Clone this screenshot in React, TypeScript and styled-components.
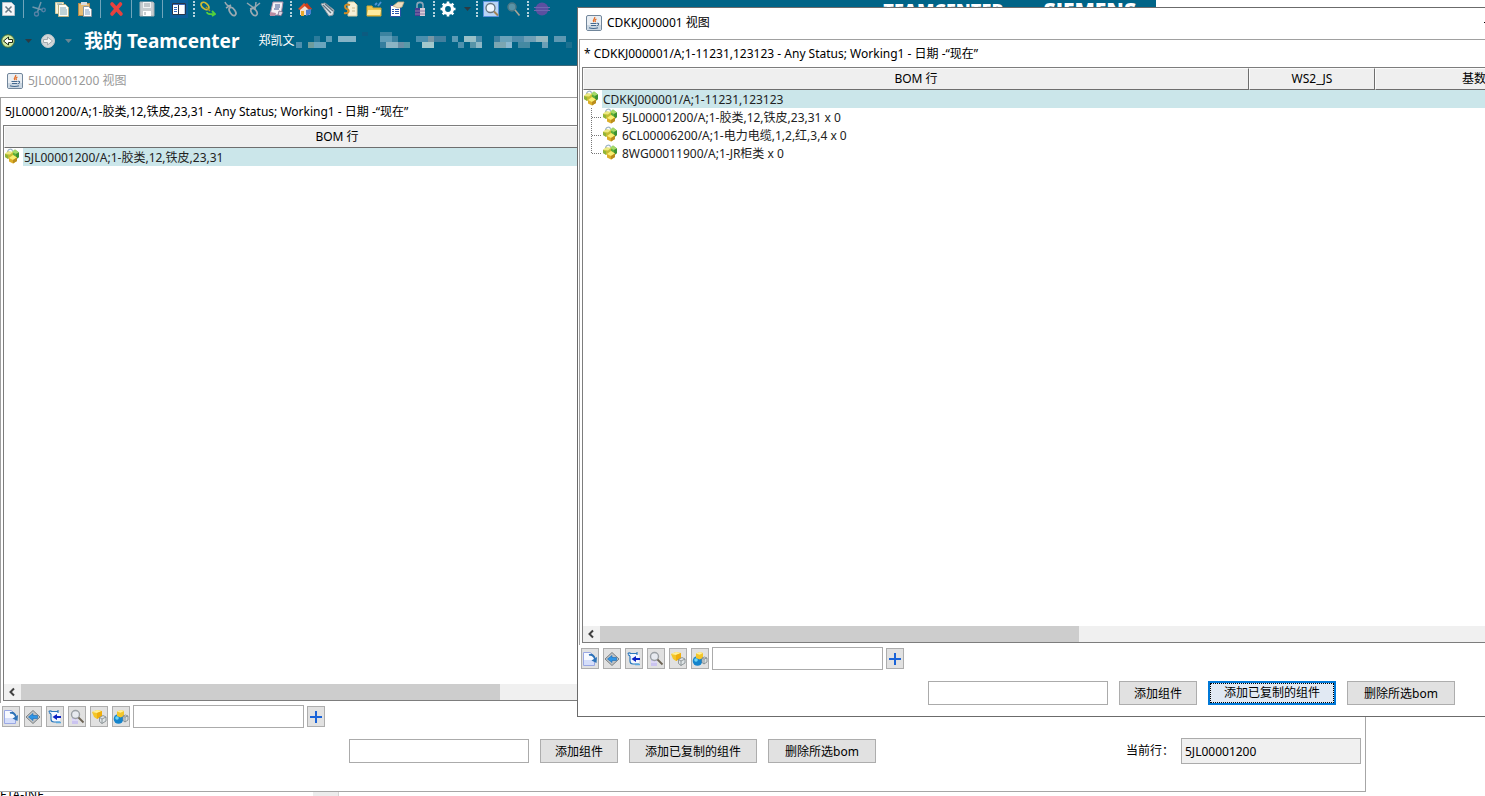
import React from 'react';
import styled, { createGlobalStyle, css } from 'styled-components';

const GlobalStyle = createGlobalStyle`
  * { box-sizing: border-box; }
  html, body, #root { height: 100%; }
  body {
    margin: 0;
    overflow: hidden;
    background: #fff;
    color: #000;
    font: 12px/18px "Noto Sans", "Noto Sans CJK SC", sans-serif;
  }
  button, input { font: inherit; color: inherit; }
`;

const Desktop = styled.div`
  position: relative;
  height: 100%;
  overflow: hidden;
  display: flex;
  flex-direction: column;
`;

/* ---------- main application, behind the two view windows ---------- */

const AppHeader = styled.header`
  height: 66px;
  margin-right: 329px;
  background: #006487;
  color: #fff;
  display: flex;
  justify-content: space-between;
  overflow: hidden;
`;

const Brand = styled.div`
  display: flex;
  gap: 40px;
  padding-right: 20px;
  font-family: "Open Sans", sans-serif;
  font-weight: 800;
  line-height: 20px;
  white-space: nowrap;
`;

const TeamcenterMark = styled.span`
  font-size: 18px;
`;

const SiemensMark = styled.span`
  font-size: 21px;
`;

const ToolRow = styled.div`
  display: flex;
  align-items: center;
  gap: 7px;
  height: 18px;
`;

const Tool = styled.button<{ $active?: boolean; $narrow?: boolean }>`
  flex: none;
  width: ${p => (p.$active ? 18 : p.$narrow ? 8 : 16)}px;
  height: 18px;
  padding: 1px ${p => (p.$active ? 1 : 0)}px;
  border: 0;
  background: ${p => (p.$active ? '#0a5f9c' : 'none')};
  svg { display: block; }
`;

const Divider = styled.span`
  flex: none;
  width: 1px;
  height: 18px;
  background: #6fa5bb;
`;

const DotDivider = styled.span`
  flex: none;
  height: 16px;
  margin-left: -2px;
  margin-right: -2px;
  border-left: 2px dotted #b4d2dd;
`;

const TitleRow = styled.div`
  display: flex;
  align-items: center;
  gap: 8px;
  height: 46px;
`;

const AppTitle = styled.h1`
  margin: 0 11px 0 4px;
  font-size: 19px;
  line-height: 26px;
  font-weight: 700;
  white-space: nowrap;
`;

const UserLine = styled.div`
  display: flex;
  align-items: center;
  gap: 2px;
  white-space: nowrap;
  svg { display: block; }
`;

const Behind = styled.footer`
  display: flex;
  gap: 270px;
  height: 9px;
  margin-top: auto;
  line-height: 16px;
  overflow: hidden;
`;

const BehindScroll = styled.span`
  width: 26px;
  background: #ececec;
  border-right: 1px solid #d4d4d4;
`;

/* ---------- view windows ---------- */

const Frame = styled.section<{ $front?: boolean }>`
  position: absolute;
  display: flex;
  flex-direction: column;
  background: #fff;
  overflow: hidden;
  ${p =>
    p.$front
      ? css`top: 7px; left: 577px; right: -119px; bottom: 79px; border: 1px solid #6b6b6b;`
      : css`top: 65px; left: -2px; right: 119px; bottom: 4px; border: 1px solid #a6a6a6; border-top-color: #3f6a7a;`}
`;

const TitleBar = styled.header<{ $front?: boolean }>`
  flex: none;
  display: flex;
  align-items: center;
  gap: 5px;
  height: 31px;
  padding: 0 109px 2px 8px;
  color: ${p => (p.$front ? '#000' : '#999')};
`;

const WindowTitle = styled.h2`
  margin: 0;
  font-size: 12px;
  font-weight: 400;
`;

const Minimise = styled.button`
  width: 10px;
  height: 1px;
  padding: 0;
  margin-left: auto;
  border: 0;
  background: #000;
`;

const Pane = styled.div`
  flex: 1;
  min-height: 0;
  display: flex;
  flex-direction: column;
  margin-left: 1px;
  padding: 0 2px 2px;
  border-top: 1px solid #a0a0a0;
  border-left: 1px solid #a0a0a0;
`;

const RevisionRule = styled.p`
  flex: none;
  margin: 0;
  padding: 5px 2px 4px;
  white-space: pre;
`;

const Grid = styled.div`
  flex: 1;
  min-height: 0;
  display: flex;
  flex-direction: column;
  border: 1px solid #7d7d7d;
`;

const GridBody = styled.div`
  flex: 1;
  min-height: 0;
  overflow: hidden;
`;

const BomTable = styled.table`
  width: 100%;
  table-layout: fixed;
  border-collapse: separate;
  border-spacing: 0;
`;

const HeadCell = styled.th<{ $width?: number }>`
  width: ${p => (p.$width ? `${p.$width}px` : 'auto')};
  height: 22px;
  padding: 0;
  background: #efefef;
  border: 1px solid #fbfbfb;
  border-right-color: #6e6e6e;
  border-bottom-color: #6e6e6e;
  font-weight: 400;
`;

const Cell = styled.td<{ $selected?: boolean }>`
  height: 18px;
  padding: 0;
  background: ${p => (p.$selected ? '#cbe6ea' : '#fff')};
`;

const TreeItem = styled.div`
  display: flex;
  background: #fff;
  svg { flex: none; display: block; }
`;

const TreeLabel = styled.span<{ $selected?: boolean }>`
  flex: 1;
  height: 18px;
  padding-left: 1px;
  line-height: 20px;
  color: #222;
  background: ${p => (p.$selected ? '#cbe6ea' : 'transparent')};
  white-space: nowrap;
`;

const ScrollBar = styled.div`
  flex: none;
  display: flex;
  height: 16px;
  background: #f0f0f0;
`;

const ScrollButton = styled.button`
  width: 17px;
  padding: 0;
  border: 0;
  background: #f0f0f0;
  svg { display: block; margin: 0 auto; }
`;

const ScrollThumb = styled.div`
  width: 479px;
  background: #cdcdcd;
`;

const FindBar = styled.div`
  flex: none;
  display: flex;
  align-items: center;
  gap: 4px;
  margin: 2px 0 0 3px;
`;

const IconButton = styled.button`
  width: 18px;
  height: 21px;
  padding: 0 0 2px;
  border: 1px solid #adadad;
  background: #e1e1e1;
  svg { display: block; }
`;

const TextBox = styled.input<{ $size: 'find' | 'form' | 'line' }>`
  width: ${p => (p.$size === 'find' ? 171 : 180)}px;
  height: ${p => (p.$size === 'find' ? 23 : p.$size === 'form' ? 24 : 26)}px;
  padding: 0 3px;
  border: 1px solid #ababab;
  background: ${p => (p.$size === 'line' ? '#f0f0f0' : '#fff')};
  outline: 0;
`;

const FindField = styled(TextBox)`
  margin: 0 -1px;
`;

const FormBar = styled.form<{ $front?: boolean }>`
  flex: none;
  display: flex;
  align-items: center;
  gap: 11px;
  height: 26px;
  margin: 10px 4px ${p => (p.$front ? 10 : 27)}px 350px;
`;

const PushButton = styled.button<{ $width: number; $focused?: boolean }>`
  flex: none;
  width: ${p => p.$width}px;
  height: 24px;
  padding: 2px 0 0;
  border: 1px solid #adadad;
  background: #e1e1e1;
  line-height: 20px;
  white-space: nowrap;
  ${p =>
    p.$focused &&
    css`
      padding: 0;
      border: 2px solid #0078d7;
      background: #e1e9f3;
      outline: 1px dotted #000;
      outline-offset: -3px;
    `}
`;

const LineField = styled.label`
  display: flex;
  align-items: center;
  gap: 7px;
  margin-left: auto;
  white-space: nowrap;
`;

/* ---------- drawings ---------- */

const Svg = ({ children }: { children: React.ReactNode }) => (
  <svg width="16" height="16" viewBox="0 0 16 16" fill="none" aria-hidden="true">
    {children}
  </svg>
);

const JavaIcon = () => (
  <svg width="16" height="16" viewBox="0 0 16 16" fill="none" aria-hidden="true">
    <rect x=".5" y=".5" width="15" height="15" rx="1.5" fill="#e9eef3" stroke="#71869b" />
    <path d="M1 10h14v5H1z" fill="#cbd7e2" />
    <path d="M8.600 2c1.200 1.800-2.800 2.600-.8 5M10.500 4c-1.700.8-2 1.500-.9 3" stroke="#e4702a" strokeWidth="1.300" />
    <path d="M4.500 8.500h6M5 10.500h5M3 12.700c2 1 7 1 9 0M11 8.300c2.500-.5 2 2.200-.3 2.400" stroke="#44698f" strokeWidth="1.100" />
  </svg>
);

const PartIcon = () => (
  <svg width="19" height="18" viewBox="0 0 19 18" fill="none" aria-hidden="true">
    <path d="M3.500 4C4 .5 8 .5 8.500 3" stroke="#9cb3c4" strokeWidth="1.200" />
    <path d="M8 4l3-2.500 4 3V9l-2.500 2L8 8z" fill="#5cb03a" />
    <path d="M8 4l3-2.500 4 3L12 6z" fill="#a5d968" />
    <path d="M12 6l3-1.500V9l-2.500 2z" fill="#3c9133" />
    <path d="M1 6l3-2.500L9 4v5l-4 2-4-2z" fill="#c2bd32" />
    <path d="M1 6l3-2.500L9 4 6 6.500z" fill="#ecea83" />
    <path d="M1 6l3 1.500V11L1 9z" fill="#8eb43b" />
    <path d="M5 10l4-3 4 2.500V13l-4 2.500-4-2z" fill="#dcae28" />
    <path d="M5 10l4-3 4 2.500L9 12z" fill="#f8ef72" />
    <path d="M9 12l4-2.500V13l-4 2.500z" fill="#b98d1c" />
  </svg>
);

const Branch = ({ last }: { last?: boolean }) => (
  <svg width="19" height="18" viewBox="0 0 19 18" fill="none" aria-hidden="true">
    <path d={`M8.500 0V${last ? 9 : 18}M9 9.500h10`} stroke="#777" strokeDasharray="1 1" />
  </svg>
);

const Caret = ({ color }: { color: string }) => (
  <svg width="8" height="16" viewBox="0 0 8 16" aria-hidden="true">
    <path d="M1 6h7L4.500 10z" fill={color} />
  </svg>
);

const glyphs: Record<string, React.ReactNode> = {
  newDoc: (<>
    <path d="M2.500 1.500h9l3 3v10h-12z" fill="#f4f6f8" stroke="#b5c0c8" />
    <path d="M5.500 5.500l6 6M11.500 5.500l-6 6" stroke="#657783" strokeWidth="1.500" />
  </>),
  cut: (<>
    <path d="M10 1L6.500 11M1.500 6l10 3" stroke="#6e97ac" strokeWidth="1.500" />
    <circle cx="5.500" cy="13" r="2" stroke="#5580a5" strokeWidth="1.300" />
    <circle cx="12.500" cy="9" r="1.800" stroke="#5580a5" strokeWidth="1.300" />
  </>),
  copy: (<>
    <path d="M1.500 1.500h8v11h-8z" fill="#f6f3dc" stroke="#d3cba0" />
    <path d="M4.500 3.500h7l3 3v9h-10z" fill="#fdfdf6" stroke="#b8af80" />
    <path d="M6 7h6M6 9h7M6 11h7M6 13h7M3 3h5" stroke="#7ea6b5" />
  </>),
  paste: (<>
    <rect x="1.500" y="2.500" width="11" height="12" fill="#e6bc74" stroke="#b38a4a" />
    <path d="M4 1h6v3H4z" fill="#d8dde0" />
    <path d="M6.500 5.500h5l3 3v7h-8z" fill="#fff" stroke="#8b98a0" />
    <path d="M8 9h4M8 11h5M8 13h5" stroke="#7ea0c4" />
  </>),
  remove: <path d="M4 3l9 10M12.500 3L4 13" stroke="#e8413e" strokeWidth="3.600" strokeLinecap="round" />,
  save: (<>
    <path d="M1 1h13l1 1v13H1z" fill="#c7cdd0" stroke="#a7afb3" />
    <path d="M4 1h8v6H4z" fill="#f1f3f4" />
    <path d="M4 10h8v5H4z" fill="#fff" />
    <path d="M5 3h6M5 5h6M6 11v3" stroke="#949da2" />
  </>),
  panel: (<>
    <path d="M1.500 2.500h13v11h-13z" fill="#fff" stroke="#27364b" />
    <path d="M2 3h12v1H2z" fill="#3b67b4" />
    <path d="M3 6.500h3M3 8.500h3M3 10.500h3" stroke="#356ac0" />
    <path d="M7.500 4v9" stroke="#27364b" />
    <path d="M13.500 4v9" stroke="#b8cde8" />
  </>),
  link: (<>
    <ellipse cx="5" cy="5" rx="4.500" ry="2.800" transform="rotate(40 5 5)" stroke="#cdbb35" strokeWidth="1.800" />
    <path d="M6 6l4 4" stroke="#a8941f" strokeWidth="1.500" />
    <path d="M7 11c0 3 4 2 8 2m-3-3l3 3-3 2" stroke="#54d13c" strokeWidth="1.800" />
  </>),
  unlink: (<>
    <path d="M2 1c1 3 3 4 6 5M3 7l5-3" stroke="#9aa9b1" strokeWidth="1.500" />
    <ellipse cx="9.500" cy="10.500" rx="4.500" ry="2.500" transform="rotate(55 9.500 10.500)" stroke="#9aa9b1" strokeWidth="1.800" />
  </>),
  unlinkAll: (<>
    <path d="M1 2l7 5 6-5M10 1l-1 8M4 8l5-2" stroke="#93a7b1" strokeWidth="1.500" />
    <ellipse cx="8" cy="11" rx="4" ry="2.500" transform="rotate(55 8 11)" stroke="#9aa9b1" strokeWidth="1.700" />
  </>),
  report: (<>
    <path d="M4 1h10l-2 13H1z" fill="#f5f1f4" stroke="#a88ea8" />
    <path d="M6 4h5M6 6h5M5 8h5" stroke="#405a96" strokeWidth="1.200" />
    <path d="M1 11l6 1-1 3H1z" fill="#b98ba0" />
    <path d="M10 10l4 1-2 4-3-1z" fill="#ddd8e4" stroke="#6d5b7d" strokeWidth=".7" />
  </>),
  home: (<>
    <path d="M3 8l5-5 5 5v6H3z" fill="#f1e0d2" />
    <path d="M1 8l6-6 8 6-2 1-5-4-5 4z" fill="#e2542c" />
    <path d="M7 4l3-2 5 6-3 1z" fill="#c93d1c" />
    <path d="M9 9l5-1v5l-5 2z" fill="#4a7ed0" />
    <path d="M4 10h3v5H4z" fill="#e6a82c" />
  </>),
  binder: (<>
    <path d="M1 3l4-1 9 7-1 5-4 1z" fill="#dfe5e9" stroke="#8a979f" />
    <path d="M3 4l8 8M5 3l8 7" stroke="#617481" strokeWidth="1.300" />
  </>),
  route: (<>
    <path d="M5 1h6l3 3v11H5z" fill="#f6f0d8" stroke="#d8cb9f" />
    <path d="M7 4c-6-2-6 3-3 4s2 5-3 4" stroke="#d28b24" strokeWidth="2" />
    <path d="M9 7h3M9 10h3" stroke="#c9ba90" />
  </>),
  folder: (<>
    <path d="M1 5h5l1 2h8v8H1z" fill="#f0c750" stroke="#d6a930" />
    <path d="M2 9h13l-1 5H1z" fill="#fdeb9f" />
    <path d="M9 4l2-2M12 5l3-4" stroke="#4f93d6" strokeWidth="1.800" />
  </>),
  props: (<>
    <path d="M1.500 4.500h10v11h-10z" fill="#fff" stroke="#2750a5" />
    <path d="M3 8.500h2M6 8.500h4M3 10.500h2M6 10.500h4M3 12.500h2M6 12.500h4" stroke="#2855ae" />
    <path d="M4 5l5-4h6l-2 5-4 1z" fill="#efddc0" stroke="#c4ab82" strokeWidth=".8" />
  </>),
  lock: (<>
    <path d="M5 7V4c0-3.500 6-3.500 6 0v3" stroke="#8fa5b8" strokeWidth="1.600" />
    <path d="M3 7h10v8H3z" fill="#d9cdd6" />
    <path d="M3 7h5v8H3z" fill="#4a3d91" />
    <path d="M3 10h10M3 13h10" stroke="#8d7aa6" />
  </>),
  gear: (<>
    <circle cx="8" cy="8" r="4.500" stroke="#fff" strokeWidth="3.200" />
    <path d="M8 .5v3M8 12.500v3M.5 8h3M12.500 8h3M2.700 2.700l2 2M11.300 11.300l2 2M13.300 2.700l-2 2M4.700 11.300l-2 2" stroke="#fff" strokeWidth="2.600" />
  </>),
  searchBox: (<>
    <path d="M.5.5h15v15H.5z" fill="#b9d5f5" stroke="#5b92de" />
    <circle cx="7.500" cy="7" r="4.500" fill="#eef6fd" stroke="#66747e" strokeWidth="1.300" />
    <path d="M11 10.500l4 4" stroke="#a28356" strokeWidth="2" />
  </>),
  search: (<>
    <circle cx="6" cy="6" r="4" fill="#5b93a6" stroke="#4c7886" strokeWidth="1.500" />
    <path d="M9 9l4.500 5.500" stroke="#a9a595" strokeWidth="1.600" />
  </>),
  globe: (<>
    <circle cx="8" cy="8" r="6.500" fill="#5b4fa0" />
    <path d="M0 6.500h16M0 9.500h16" stroke="#6f68b0" />
  </>),
  back: (<>
    <circle cx="8" cy="8" r="6.300" fill="#cfeaa4" stroke="#4c6f33" />
    <path d="M12.500 6.500H8.500V4L3.500 8l5 4V9.500h4z" fill="#fff" stroke="#1d2b14" />
  </>),
  forward: (<>
    <circle cx="8" cy="8" r="6.500" fill="#d2d7d9" stroke="#c0c7ca" />
    <path d="M3.500 6.500h4V4l5 4-5 4V9.500h-4z" fill="#f6f7f7" stroke="#a4abaf" />
  </>),
  page: (<>
    <path d="M1.500 2.500h7l4 4v9h-11z" fill="#f7f9ff" stroke="#9aa8e4" />
    <path d="M2 10h10v5H2z" fill="#d5defa" />
    <path d="M7 5c3-1 5 1 6 4" stroke="#2e73b8" strokeWidth="1.800" />
    <path d="M15 7l-.5 6L9.500 10.500z" fill="#2e73b8" />
  </>),
  compare: (<>
    <path d="M8 2.500L15 9l-7 6.500L1 9z" fill="#bfc3c6" stroke="#7b8083" />
    <path d="M12.500 7.500H8V5.500L3.500 9l4.500 3.500v-2h4.500z" fill="#2f95e6" stroke="#1a6ab4" strokeWidth=".6" />
  </>),
  sheet: (<>
    <path d="M2 3.500h10l1 2v8.500H6c-2 0-2-2-2-3V6L2 5z" fill="#f4f8ff" />
    <path d="M5 3.500h6M4 6v5c0 2 1 3 3 3h6M2 4c0-1.500 2-1.500 3 0M2 4.500L4 6M11 2v3" stroke="#2b78bd" strokeWidth="1.200" />
    <path d="M14 9H8" stroke="#0a22c4" strokeWidth="2" />
    <path d="M5.500 9L10 6v6z" fill="#0a22c4" />
    <path d="M9 14.500h5" stroke="#58a8de" strokeWidth="1.500" />
  </>),
  find: (<>
    <path d="M3 9h6v7H3z" fill="#cbc4f0" />
    <path d="M3 12h6" stroke="#eeebfa" />
    <circle cx="6.500" cy="6.500" r="4" fill="#e7eaf0" stroke="#9ba0a5" strokeWidth="1.400" />
    <path d="M9.500 9.500l5 5" stroke="#6d6455" strokeWidth="1.800" />
  </>),
  cube: (<>
    <path d="M1 4l5-2 5 1v5l-5 3-3-2z" fill="#f3c62a" />
    <path d="M1 4l5-2 5 1-5 2z" fill="#fff09a" />
    <path d="M6 5l5-2v5l-5 3z" fill="#f0ae0c" />
    <path d="M8.500 9.500L12 7.500 15 9v4l-4 2.500-2.500-2zM8.500 9.500L11 11l4-2M11 11v4.500" fill="#dfe4e6" stroke="#7c8588" strokeWidth=".8" />
  </>),
  ball: (<>
    <circle cx="5.500" cy="11" r="4.800" fill="#1484cc" />
    <circle cx="4" cy="10" r="1.800" fill="#6fd6f4" />
    <path d="M4 3.500L8 2l3 1v5L7.500 9.500 4 8z" fill="#f3c62a" />
    <path d="M4 3.500L8 2l3 1-3.500 1.800z" fill="#fff09a" />
    <path d="M10 8l2.500-1L15 8v4l-3 2-2-1.500zM10 8l2 1 3-1M12 9v5" fill="#d9dfe1" stroke="#7c8588" strokeWidth=".8" />
  </>),
  plus: <path d="M8 3v12M2 9h12" stroke="#1a63d8" strokeWidth="2" />,
};

/* Pixelated session details: [x, y, width, colour] in 6px cells */
const mosaic: [number, number, number, string][] = [
  [0, 2, 1, '#4d8fae'], [2, 2, 1, '#6f9c9c'], [3, 2, 2, '#6aa5bd'], [3, 1, 1, '#2b7b9b'], [5, 1, 1, '#5c9cb6'],
  [7, 1, 3, '#84b3c6'], [11, 0, 1, '#0c5b80'], [14, 0, 2, '#3c83a0'], [14, 1, 2, '#5f9db8'], [14, 2, 1, '#347e9e'],
  [15, 2, 2, '#8cb4c4'], [16, 1, 1, '#3b82a0'], [17, 2, 1, '#6a8fa6'], [18, 2, 1, '#5799a8'], [20, 1, 2, '#4a8fae'],
  [21, 2, 2, '#a2c8cc'], [22, 1, 1, '#7897a5'], [23, 1, 2, '#427f9e'], [26, 1, 1, '#5b9ab4'], [27, 2, 1, '#4e91ad'],
  [28, 1, 2, '#99c0c8'], [29, 2, 1, '#5794a8'], [30, 1, 1, '#4789a8'], [30, 2, 1, '#8eb8c6'], [33, 1, 1, '#3d80a0'],
  [33, 2, 2, '#7ba6b2'], [34, 1, 2, '#69a2ba'], [35, 2, 1, '#8ab8d0'], [36, 1, 2, '#4d8cab'], [37, 2, 2, '#4489a2'],
  [38, 1, 2, '#6e9fb6'], [40, 1, 2, '#93b6bf'], [41, 2, 1, '#6a9fb6'], [43, 1, 2, '#5d98b2'], [45, 2, 1, '#1b7090'],
];

const Mosaic = () => (
  <svg width="276" height="18" viewBox="0 2 276 18" shapeRendering="crispEdges" aria-hidden="true">
    {mosaic.map(([x, y, w, c], i) => (
      <rect key={i} x={x * 6} y={y * 6} width={w * 6} height="6" fill={c} />
    ))}
  </svg>
);

const mainTools = [
  'newDoc', '|', 'cut', 'copy', 'paste', '|', 'remove', '|', 'save', '|', 'panel', ':', 'link', 'unlink',
  'unlinkAll', 'report', ':', 'home', 'binder', 'route', 'folder', 'props', 'lock', ':', 'gear', 'v', ':',
  'searchBox', 'search', ':', 'globe',
];

const findTools = ['page', 'compare', 'sheet', 'find', 'cube', 'ball'];

type ViewProps = {
  title: string;
  rule: string;
  root: string;
  columns: { label: string; width: number }[];
  lines?: string[];
  front?: boolean;
  currentLine?: string;
};

const ViewWindow = ({ title, rule, root, columns, lines = [], front, currentLine }: ViewProps) => (
  <Frame $front={front}>
    <TitleBar $front={front}>
      <JavaIcon />
      <WindowTitle>{title}</WindowTitle>
      {front && <Minimise aria-label="最小化" />}
    </TitleBar>
    <Pane>
      <RevisionRule>{rule}</RevisionRule>
      <Grid>
        <GridBody>
          <BomTable>
            <thead>
              <tr>
                {columns.map(c => (
                  <HeadCell key={c.label} $width={c.width}>{c.label}</HeadCell>
                ))}
                <HeadCell />
              </tr>
            </thead>
            <tbody>
              <tr>
                <Cell>
                  <TreeItem>
                    <PartIcon />
                    <TreeLabel $selected>{root}</TreeLabel>
                  </TreeItem>
                </Cell>
                <Cell $selected colSpan={columns.length} />
              </tr>
              {lines.map((line, i) => (
                <tr key={line}>
                  <Cell>
                    <TreeItem>
                      <Branch last={i === lines.length - 1} />
                      <PartIcon />
                      <TreeLabel>{line}</TreeLabel>
                    </TreeItem>
                  </Cell>
                  <Cell colSpan={columns.length} />
                </tr>
              ))}
            </tbody>
          </BomTable>
        </GridBody>
        <ScrollBar>
          <ScrollButton aria-label="向左滚动">
            <svg width="9" height="10" viewBox="0 0 9 10" fill="none" aria-hidden="true">
              <path d="M6 1.500L2.500 5 6 8.500" stroke="#404040" strokeWidth="2" />
            </svg>
          </ScrollButton>
          <ScrollThumb />
        </ScrollBar>
      </Grid>
    </Pane>
    <FindBar>
      {findTools.map(name => (
        <IconButton key={name} aria-label={name}>
          <Svg>{glyphs[name]}</Svg>
        </IconButton>
      ))}
      <FindField $size="find" aria-label="查找" />
      <IconButton aria-label="plus">
        <Svg>{glyphs.plus}</Svg>
      </IconButton>
    </FindBar>
    <FormBar $front={front} onSubmit={e => e.preventDefault()}>
      <TextBox $size="form" aria-label="组件" />
      <PushButton type="button" $width={78}>添加组件</PushButton>
      <PushButton type="button" $width={128} $focused={front}>添加已复制的组件</PushButton>
      <PushButton type="button" $width={108}>删除所选bom</PushButton>
      {currentLine && (
        <LineField>
          当前行：
          <TextBox $size="line" readOnly value={currentLine} />
        </LineField>
      )}
    </FormBar>
  </Frame>
);

const bomColumn = { label: 'BOM 行', width: 666 };

export default function App() {
  return (
    <Desktop>
      <GlobalStyle />
      <AppHeader>
        <div>
          <ToolRow>
            {mainTools.map((name, i) => {
              if (name === '|') return <Divider key={i} />;
              if (name === ':') return <DotDivider key={i} />;
              if (name === 'v') return <Tool key={i} $narrow aria-label="menu"><Caret color="#2c3a42" /></Tool>;
              return (
                <Tool key={i} $active={name === 'panel'} aria-label={name}>
                  <Svg>{glyphs[name]}</Svg>
                </Tool>
              );
            })}
          </ToolRow>
          <TitleRow>
            <Tool aria-label="back"><Svg>{glyphs.back}</Svg></Tool>
            <Tool $narrow aria-label="back list"><Caret color="#2c3a42" /></Tool>
            <Tool aria-label="forward"><Svg>{glyphs.forward}</Svg></Tool>
            <Tool $narrow aria-label="forward list"><Caret color="#6b8794" /></Tool>
            <AppTitle>我的 Teamcenter</AppTitle>
            <UserLine>
              郑凯文
              <Mosaic />
            </UserLine>
          </TitleRow>
        </div>
        <Brand>
          <TeamcenterMark>TEAMCENTER</TeamcenterMark>
          <SiemensMark>SIEMENS</SiemensMark>
        </Brand>
      </AppHeader>
      <Behind>
        ETA-INF
        <BehindScroll />
      </Behind>
      <ViewWindow
        title="5JL00001200 视图"
        rule="5JL00001200/A;1-胶类,12,铁皮,23,31 - Any Status; Working1 - 日期 -“现在”"
        root="5JL00001200/A;1-胶类,12,铁皮,23,31"
        columns={[bomColumn]}
        currentLine="5JL00001200"
      />
      <ViewWindow
        front
        title="CDKKJ000001 视图"
        rule="* CDKKJ000001/A;1-11231,123123 - Any Status; Working1 - 日期 -“现在”"
        root="CDKKJ000001/A;1-11231,123123"
        columns={[bomColumn, { label: 'WS2_JS', width: 126 }, { label: '基数', width: 198 }]}
        lines={[
          '5JL00001200/A;1-胶类,12,铁皮,23,31 x 0',
          '6CL00006200/A;1-电力电缆,1,2,红,3,4 x 0',
          '8WG00011900/A;1-JR柜类 x 0',
        ]}
      />
    </Desktop>
  );
}
